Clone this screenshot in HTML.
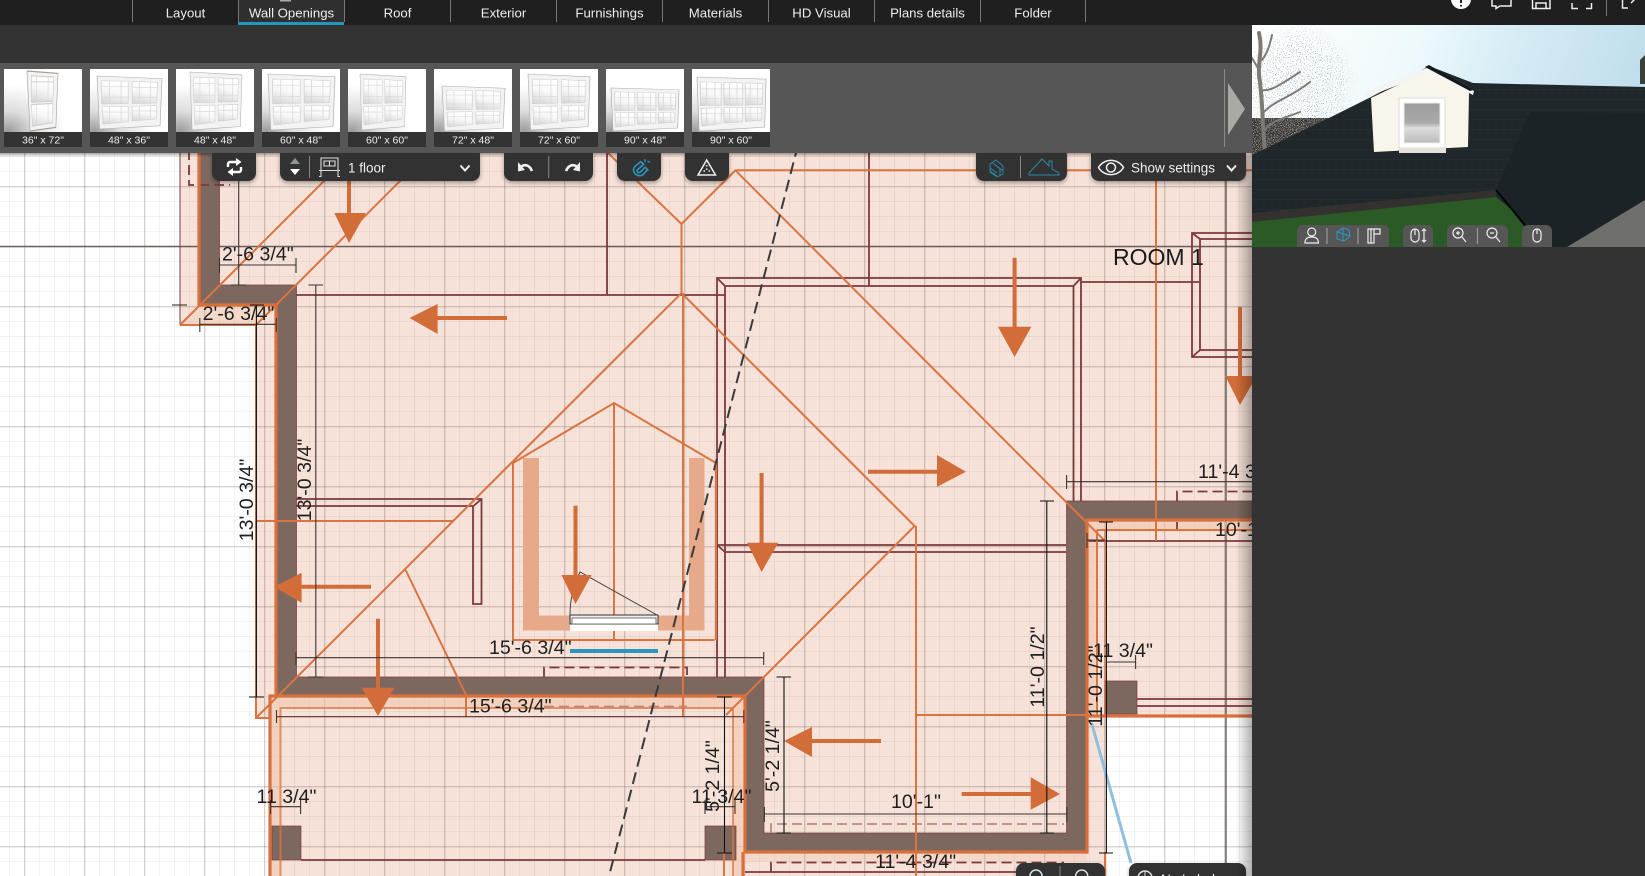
<!DOCTYPE html>
<html><head><meta charset="utf-8"><title>Wall Openings</title>
<style>
html,body{margin:0;padding:0;background:#333;width:1645px;height:876px;overflow:hidden}
svg{display:block}
text{font-family:"Liberation Sans",sans-serif}
.d{font-size:19.6px;fill:#1f1f1f}
.t{font-size:13.2px;fill:#eee;text-anchor:middle}
.l{font-size:10.5px;fill:#eee;text-anchor:middle}
</style></head><body>
<svg width="1645" height="876" viewBox="0 0 1645 876" xmlns="http://www.w3.org/2000/svg">
<defs>
<pattern id="g" x="24" y="6" width="60" height="60" patternUnits="userSpaceOnUse">
<rect x="15" width="1" height="60" fill="rgba(90,70,60,.065)"/><rect x="30" width="1" height="60" fill="rgba(90,70,60,.08)"/><rect x="45" width="1" height="60" fill="rgba(90,70,60,.065)"/>
<rect y="15" width="60" height="1" fill="rgba(90,70,60,.065)"/><rect y="30" width="60" height="1" fill="rgba(90,70,60,.08)"/><rect y="45" width="60" height="1" fill="rgba(90,70,60,.065)"/>
<rect width="1.3" height="60" fill="rgba(70,60,60,.24)"/><rect width="60" height="1.4" fill="rgba(70,60,60,.22)"/>
</pattern>
<pattern id="sh" width="16" height="10" patternUnits="userSpaceOnUse"><rect width="16" height="10" fill="#20272a"/><path d="M0 9.500h16M8 0v5" stroke="#252c2f" stroke-width="1"/></pattern>
<linearGradient id="sky" x1="0" x2="1" y1="0" y2=".2"><stop offset="0" stop-color="#fff"/><stop offset=".42" stop-color="#eef9fc"/><stop offset=".62" stop-color="#d9eef6"/><stop offset="1" stop-color="#bfdeeb"/></linearGradient>
<linearGradient id="gl" x1="0" x2="0" y1="0" y2="1"><stop offset="0" stop-color="#9c9c9c"/><stop offset=".5" stop-color="#aaa"/><stop offset=".62" stop-color="#ddd"/><stop offset="1" stop-color="#bbb"/></linearGradient>
<linearGradient id="bar" x1="0" x2="1"><stop offset="0" stop-color="#000" stop-opacity="0"/><stop offset="1" stop-color="#000" stop-opacity=".3"/></linearGradient>
<linearGradient id="pb" x1="0" x2="0" y1="0" y2="1"><stop offset="0" stop-color="#000" stop-opacity=".35"/><stop offset="1" stop-color="#000" stop-opacity="0"/></linearGradient>
<radialGradient id="ts" cx=".05" cy="1" r=".75"><stop offset="0" stop-color="#9a9a9a"/><stop offset=".45" stop-color="#dedede"/><stop offset="1" stop-color="#fff"/></radialGradient>
<linearGradient id="pn" x1="0" x2=".3" y1="1" y2="0"><stop offset="0" stop-color="#d4d4d4"/><stop offset=".6" stop-color="#f8f8f8"/><stop offset="1" stop-color="#fff"/></linearGradient>
<radialGradient id="tf"><stop offset="0" stop-color="#000"/><stop offset=".65" stop-color="#000" stop-opacity=".85"/><stop offset="1" stop-color="#000" stop-opacity="0"/></radialGradient>
<filter id="sp" x="0" y="0" width="1" height="1"><feTurbulence type="fractalNoise" baseFrequency="1.1" numOctaves="1" seed="3"/><feColorMatrix values="0 0 0 0 .25 0 0 0 0 .25 0 0 0 0 .25 12 0 0 0 -7.4"/><feComposite in2="SourceGraphic" operator="in"/></filter>
<filter id="sq" x="0" y="0" width="1" height="1"><feTurbulence type="fractalNoise" baseFrequency="1.1" numOctaves="1" seed="8"/><feColorMatrix values="0 0 0 0 .55 0 0 0 0 .53 0 0 0 0 .5 12 0 0 0 -6.4"/><feComposite in2="SourceGraphic" operator="in"/></filter>
<filter id="ds" x="-10%" y="-10%" width="120%" height="140%"><feDropShadow dx="0" dy="2" stdDeviation="2" flood-color="#000" flood-opacity=".35"/></filter>

<g id="w1">
<polygon points="0,0 100,4 93,94 10,100" fill="#f3f3f3" stroke="#a99c94" stroke-width="2"/>
<polygon points="14,8 86,10 84,50 14,52" fill="url(#pn)" stroke="#cfcfcf" stroke-width="2"/>
<polygon points="15,56 84,54 82,86 17,92" fill="url(#pn)" stroke="#cfcfcf" stroke-width="2"/>
<path d="M30 8v44M68 10v40M14 18h72M31 56v33M68 55v32" stroke="#d6d6d6" stroke-width="2" fill="none"/>
</g>
<g id="w2">
<polygon points="0,0 100,5 97,94 4,100" fill="#f3f3f3" stroke="#b3a8a2" stroke-width="1"/>
<polygon points="7,9 48,10 48,52 7,53" fill="url(#pn)" stroke="#cdcdcd" stroke-width="1"/>
<polygon points="54,10 93,12 92,51 54,52" fill="url(#pn)" stroke="#cdcdcd" stroke-width="1"/>
<polygon points="8,58 48,57 48,86 9,91" fill="url(#pn)" stroke="#cdcdcd" stroke-width="1"/>
<polygon points="54,57 92,56 91,81 54,85" fill="url(#pn)" stroke="#cdcdcd" stroke-width="1"/>
<path d="M19 9v44M37 10v42M7 20h41M7 40h41M65 10v42M82 11v40M54 22h39M54 40h38M19 58v31M37 57v30M65 57v27M82 56v26M8 68h40M54 66h38" stroke="#d8d8d8" stroke-width="1.200" fill="none"/>
</g>
<g id="w3">
<polygon points="0,0 100,4 98,93 3,100" fill="#f3f3f3" stroke="#b3a8a2" stroke-width="1"/>
<polygon points="5,9 35,10 35,52 5,53" fill="url(#pn)" stroke="#cdcdcd" stroke-width="1"/>
<polygon points="39,10 66,11 66,52 39,52" fill="url(#pn)" stroke="#cdcdcd" stroke-width="1"/>
<polygon points="70,11 95,12 95,51 70,52" fill="url(#pn)" stroke="#cdcdcd" stroke-width="1"/>
<polygon points="6,58 35,57 35,86 7,91" fill="url(#pn)" stroke="#cdcdcd" stroke-width="1"/>
<polygon points="39,57 66,57 66,83 39,85" fill="url(#pn)" stroke="#cdcdcd" stroke-width="1"/>
<polygon points="70,57 94,56 94,80 70,82" fill="url(#pn)" stroke="#cdcdcd" stroke-width="1"/>
<path d="M14 9v44M26 10v42M47 10v42M58 11v41M77 11v40M88 12v39M5 22h90M5 40h90M14 58v31M26 57v30M47 57v27M58 57v26M77 57v25M88 56v24M6 68h88" stroke="#d8d8d8" stroke-width="1.200" fill="none"/>
</g>
<g id="th"><rect width="78" height="63" fill="#fff"/><rect width="78" height="63" fill="url(#ts)"/></g>
</defs>

<!-- canvas -->
<rect width="1645" height="876" fill="#fff"/>
<polygon points="180,150 1252,150 1252,717 1107,717 1107,876 270,876 270,718 257,718 257,325 180,325" fill="#f6e2d8"/>
<rect width="1252" height="876" fill="url(#g)"/>
<!-- axis lines -->
<path d="M0 246.500H1252" stroke="#6a6260" stroke-width="1.400"/>
<path d="M1226 153V876" stroke="#4a4442" stroke-width="1.200"/>
<path d="M180 153V325" stroke="#7e383c" stroke-width="1"/>

<!-- light eave bands -->
<g fill="#f2c6b0" opacity=".6">
<polygon points="270,696 745,696 733,708 280,708 280,876 270,876"/>
<rect x="733" y="696" width="12" height="180"/>
<polygon points="1087,520 1252,520 1252,530 1097,530 1097,716 1087,716"/>
<rect x="745" y="852" width="342" height="10" opacity=".5"/>
<polygon points="180,325 199,305 276,305 256,325" opacity=".5"/>
</g>

<!-- light U -->
<path d="M523 458h16v157.500h150V458h15.500v172.500H523z" fill="#e6a98a"/>

<!-- walls -->
<polygon points="199,150 219.500,150 219.500,285 296.500,285 296.500,677 764,677 764,833 1066.500,833 1066.500,501 1252,501 1252,520 1087,520 1087,852 745.500,852 745.500,696 276,696 276,305 199,305" fill="#7d685f" stroke="#7e383c" stroke-width=".7"/>
<rect x="272" y="826" width="29" height="34" fill="#7d685f" stroke="#7e383c" stroke-width=".7"/>
<rect x="705" y="826" width="31" height="34" fill="#7d685f" stroke="#7e383c" stroke-width=".7"/>
<rect x="1105" y="681" width="32" height="33" fill="#7d685f" stroke="#7e383c" stroke-width=".7"/>

<!-- dark red structure -->
<g fill="none" stroke="#7e383c" stroke-width="1.800">
<path d="M296 295H725M607 153V295M869 153V286"/>
<path d="M717 677V278H1081V501M725 677V286H1073.500V501M717 278l8 8M1081 278l-7.500 8"/>
<path d="M717 545H1066M725 552H1066M717 545l8 7"/>
<path d="M1081 282H1199"/>
<path d="M1252 233H1192V357H1252M1252 239H1200V350H1252M1192 233l8 6M1192 357l8-7"/>
<path d="M296 499H481.500V604H473V506H296M481.500 499l-8 7"/>
<path d="M301 860H705"/>
<path d="M1137 699H1252M1137 706H1252"/>
<path d="M745 872H1087"/>
<path d="M1087 541H1252"/>
</g>
<g fill="none" stroke="#7e383c" stroke-width="1.800" stroke-dasharray="10 5">
<path d="M544 677V667.500H687V677"/>
<path d="M189 150V185H230"/>
<path d="M1177 501V491.500H1252"/>
<path d="M771 872V862.500H1064"/>
<path d="M1177 522V530"/>
</g>
<g fill="none" stroke="#b98a80" stroke-width="1.800" stroke-dasharray="10 5">
<path d="M771 833V824H1064"/>
<path d="M544 706.500H687"/>
</g>

<!-- orange roof lines -->
<g fill="none" stroke="#da7440" stroke-width="2">
<path d="M180 325L352 153M256 325L428 153M276 305L299 282"/>
<path d="M608 153L681.500 224L735.400 170.300H1252"/>
<path d="M735.400 170.300L1104 540"/>
<path d="M681.500 224V293M683 293V717"/>
<path d="M256 718L681.500 293L914.600 526L726 715"/>
<path d="M405.600 570L466 695V717"/>
<path d="M916 526V876"/>
<path d="M916 715H1087"/>
<path d="M1156 170V541"/>
<path d="M256 521H453"/>
<path d="M513 640V463L614 403L716 463V640M614 403V640M513 640H714.500"/>
<path d="M180 325H256"/>
<path d="M256 325V718H270"/>
<path d="M1097 530H1252M1097 530V716"/>
<path d="M1105 530V716" opacity=".6"/>
<path d="M280.500 876V708H733V876" opacity=".75"/>
<path d="M724 853V876"/>
<path d="M1105 852V876"/>
</g>
<g fill="none" stroke="#d9703c" stroke-width="3.200">
<path d="M199 150V305H276V696M270 876V696H745V852H1087V520H1252"/>
<path d="M1087 716H1252"/>
<path d="M743 852V876"/>
</g>

<!-- window opening -->
<rect x="570" y="615" width="88" height="16" fill="#fff"/>
<rect x="570" y="615" width="88" height="9" fill="#eee" stroke="#333" stroke-width="1"/>
<rect x="572" y="618" width="84" height="6" fill="#fff" stroke="#555" stroke-width=".8"/>
<path d="M570 615C570 598 574 584 580 572L657 615" fill="none" stroke="#444" stroke-width="1"/>
<rect x="570" y="649" width="88" height="4" fill="#2a96c0"/>

<!-- arrows -->
<g fill="#d26c38" stroke="none">
<path d="M347 181h4v32h14.700L349 243L334.300 213H347z"/>
<path d="M507 316v4H437.600v14L409.600 318L437.600 304v12z"/>
<path d="M1012.600 257.700h4v69h14.700L1014.600 357L998 326.700h14.600z"/>
<path d="M1238 306.700h4v69.300h14.700L1240 405L1225.300 376H1238z"/>
<path d="M868 469.700h69v-14.700L966 471.700L937 486.700v-13H868z"/>
<path d="M759.600 473h4v69.700h14.700L761.600 572L747 542.700h12.600z"/>
<path d="M573.500 505.700h4v69.300h14L575.500 604L561.500 575h12z"/>
<path d="M371 584.700v4H301.600v14L274 586.700L301.600 572.700v12z"/>
<path d="M376 618.700h4v69h14.500L378 716L361.500 687.700H376z"/>
<path d="M881 739v4H812v14L784 741L812 727v12z"/>
<path d="M961.700 792h69v-14.700L1060 794L1030.700 809.700v-13.700h-69z"/>
</g>

<!-- dashed line + blue link -->
<path d="M798 145L608 880" stroke="#3a3a3a" stroke-width="2" stroke-dasharray="12 6" fill="none"/>
<path d="M1091.600 723L1131 863" stroke="#8fbede" stroke-width="3" fill="none"/>

<!-- dimensions -->
<g fill="none" stroke="#3a3533" stroke-width="1.100">
<path d="M219.500 265H296M219.500 258V273M296 258V273"/>
<path d="M199.800 324.300H276.300M199.800 318V332M276.300 318V332"/>
<path d="M238.700 181V285M231 285H246"/>
<path d="M172 305H187"/>
<path d="M256.400 305V697M250 305H264M249 697H264" stroke="#111"/>
<path d="M315.800 285V677M308.500 285H323M308 677H323"/>
<path d="M296 657.700H763.700M296 652V665M763.700 652V665"/>
<path d="M276.500 716.700H743.800M276.500 710V723M743.800 710V723" stroke="#5a2c2e"/>
<path d="M270.600 806.700H300.600M270.600 800V814M300.600 800V814"/>
<path d="M705 806.700H735M705 800V814M735 800V814"/>
<path d="M724.500 697V853M717 697H732M717 853H732" stroke="#111"/>
<path d="M784 677V833M776.500 677H791M776.500 833H791" stroke="#111"/>
<path d="M764.400 814H1066.800M764.400 807V822M1066.800 807V822"/>
<path d="M1046.800 501V833M1040 501H1054M1040 833H1054" stroke="#111"/>
<path d="M1106.400 522V853M1099 522H1113M1099 853H1113" stroke="#111"/>
<path d="M1106 662H1135.600M1135.600 655V669"/>
<path d="M1066.600 481.700H1252M1066.600 475V489"/>
<path d="M1087 540H1105M1087 533V548"/>
</g>
<g class="d">
<text class="d" x="222" y="260.700">2'-6 3/4"</text>
<text class="d" x="202.600" y="320">2'-6 3/4"</text>
<text class="d" text-anchor="middle" transform="translate(252.800 500) rotate(-90)">13'-0 3/4"</text>
<text class="d" text-anchor="middle" transform="translate(311 480) rotate(-90)">13'-0 3/4"</text>
<text class="d" x="489" y="654">15'-6 3/4"</text>
<text class="d" x="469" y="712.700">15'-6 3/4"</text>
<text class="d" x="256.500" y="803">11 3/4"</text>
<text class="d" x="691.500" y="803">11 3/4"</text>
<text class="d" text-anchor="middle" transform="translate(719 776) rotate(-90)">5'-2 1/4"</text>
<text class="d" text-anchor="middle" transform="translate(779 756) rotate(-90)">5'-2 1/4"</text>
<text class="d" x="891" y="808">10'-1"</text>
<text class="d" x="875" y="868">11'-4 3/4"</text>
<text class="d" text-anchor="middle" transform="translate(1044 667) rotate(-90)">11'-0 1/2"</text>
<text class="d" text-anchor="middle" transform="translate(1102 686) rotate(-90)">11'-0 1/2"</text>
<text class="d" x="1093" y="657">11 3/4"</text>
<text class="d" x="1198" y="478">11'-4 3/4"</text>
<text class="d" x="1215" y="536">10'-1"</text>
<text x="1113" y="265" style="font-size:23px;fill:#1a1a1a">ROOM 1</text>
</g>

<!-- floor bottom toolbars -->
<g filter="url(#ds)">
<path d="M1016 876V871a8 8 0 0 1 8-8h73a8 8 0 0 1 8 8v5z" fill="#333"/>
<path d="M1129 876V871a8 8 0 0 1 8-8h101a8 8 0 0 1 8 8v5z" fill="#333"/>
</g>
<circle cx="1036" cy="876" r="6" fill="none" stroke="#cfe8f2" stroke-width="1.500"/>
<path d="M1060 866V876" stroke="#888"/>
<circle cx="1081.700" cy="876" r="6" fill="none" stroke="#ddd" stroke-width="1.500"/>
<circle cx="1145" cy="878" r="7" fill="none" stroke="#ddd" stroke-width="1.500"/><path d="M1145 871v10M1138 878h14" stroke="#ddd"/>
<text x="1161" y="884" style="font-size:13.500px;fill:#eee">No Labels</text>

<!-- right side panel -->
<rect x="1236" y="153" width="16" height="723" fill="url(#bar)"/>
<rect x="1252" y="25" width="393" height="851" fill="#333"/>

<!-- 3D view -->
<svg x="1252" y="25" width="393" height="222" viewBox="1252 25 393 222">
<rect x="1252" y="25" width="393" height="222" fill="url(#sky)"/>
<rect x="1252" y="118" width="90" height="42" fill="#3a3835"/>
<ellipse cx="1298" cy="85" rx="62" ry="65" fill="url(#tf)" filter="url(#sp)"/>
<rect x="1252" y="118" width="90" height="42" fill="#000" filter="url(#sq)" opacity=".7"/>
<g fill="none" stroke="#7d7a75" stroke-linecap="round">
<path d="M1265 150C1262 125 1263 100 1259 75C1258 60 1263 50 1259 33" stroke-width="4"/>
<path d="M1261 90C1270 92 1280 85 1300 72M1264 112C1275 100 1290 98 1310 82M1259 70L1252 58M1265 130C1272 120 1285 118 1300 112M1262 60C1268 52 1270 44 1272 35" stroke-width="2"/>
</g>
<polygon points="1252,155 1333,116 1371,97 1429,66 1473,83 1645,87 1645,247 1252,247" fill="url(#sh)"/>
<polygon points="1252,213 1496,190 1496,197 1252,222" fill="#33312f"/>
<polygon points="1252,222 1496,197 1557,247 1252,247" fill="#2c5a26"/>
<polygon points="1530,112 1645,113 1645,205 1567,247 1540,247 1496,190" fill="#1c2326"/>
<polygon points="1645,200 1567,247 1645,247" fill="#6e6e6c"/>
<path d="M1543 247L1496 190" stroke="#050607" stroke-width="2"/>
<path d="M1640 60L1645 55V84H1640z" fill="#39403a"/>
<!-- dormer -->
<polygon points="1371,98 1429,70 1469,93 1468,147 1374,152" fill="#f8f6ea"/>
<polygon points="1365,92 1429,67 1474,91 1473,95 1429,73 1367,97" fill="#f4f4f2"/>
<polygon points="1425,67 1429,65 1473,90 1470,91" fill="#15191b"/>
<rect x="1399" y="98" width="46" height="50" fill="#fff" stroke="#ddd"/>
<rect x="1404" y="103" width="36" height="40" fill="url(#gl)" stroke="#eee"/>
<rect x="1399" y="148" width="47" height="5" fill="#e4e2d8"/>
</svg>
<!-- 3D toolbar -->
<g fill="#565656">
<path d="M1297 247V231a6 6 0 0 1 6-6h80a6 6 0 0 1 6 6v16z"/>
<path d="M1403 247V231a6 6 0 0 1 6-6h18a6 6 0 0 1 6 6v16z"/>
<path d="M1447 247V231a6 6 0 0 1 6-6h49a6 6 0 0 1 6 6v16z"/>
<path d="M1522 247V231a6 6 0 0 1 6-6h18a6 6 0 0 1 6 6v16z"/>
</g>
<g fill="none" stroke="#eee" stroke-width="1.200">
<circle cx="1311.700" cy="232" r="4"/><path d="M1305 243c0-5 3-6 6.700-6s6.700 1 6.700 6z"/>
<path d="M1327 228V244M1358 228V244M1477.500 228V244" stroke="#999"/>
<path d="M1368 229h12v5h-6v9h-6zM1371 229v14M1374 234v-5" />
<rect x="1411" y="229" width="8" height="13" rx="4"/><path d="M1415 229v6M1424 229v13M1422 231l2-2 2 2M1422 240l2 2 2-2"/>
<circle cx="1458" cy="233" r="5"/><path d="M1462 237l4 5M1456 233h4M1458 231v4"/>
<circle cx="1492" cy="233" r="5"/><path d="M1496 237l4 5M1490 233h4"/>
<rect x="1533" y="229" width="8" height="13" rx="4"/><path d="M1537 229v5"/>
</g>
<path d="M1337 232l6-4 6 2 1 6-6 5-7-2zM1343 228v13M1337 232l13 4" fill="none" stroke="#2a96c0" stroke-width="1.100"/>

<!-- top bars -->
<rect width="1645" height="25" fill="#1f1f1f"/>
<rect x="0" y="25" width="1252" height="38" fill="#333"/>
<rect x="0" y="63" width="1252" height="90" fill="#565656"/>
<rect x="0" y="153" width="1236" height="4" fill="url(#pb)"/>
<rect x="238" y="0" width="106" height="22" fill="#2f2f2f"/>
<rect x="238" y="22" width="106" height="3" fill="#2596bd"/>
<path d="M132.500 0V22M238.500 0V22M344.500 0V22M450.500 0V22M556.500 0V22M662.500 0V22M768.500 0V22M874.500 0V22M980.500 0V22M1085.500 0V22" stroke="#777"/>
<rect x="280" y="0" width="11" height="1.500" fill="#aaa"/>
<text class="t" x="185.500" y="17.500">Layout</text>
<text class="t" x="291.500" y="17.500">Wall Openings</text>
<text class="t" x="397.500" y="17.500">Roof</text>
<text class="t" x="503.500" y="17.500">Exterior</text>
<text class="t" x="609.500" y="17.500">Furnishings</text>
<text class="t" x="715.500" y="17.500">Materials</text>
<text class="t" x="821.500" y="17.500">HD Visual</text>
<text class="t" x="927.500" y="17.500">Plans details</text>
<text class="t" x="1033" y="17.500">Folder</text>
<!-- top right icons -->
<circle cx="1461" cy="-1" r="10" fill="#fff"/><path d="M1461 0V3M1461 5v1.500" stroke="#222" stroke-width="2"/>
<path d="M1492 -4V6H1496L1496 8.500L1500 6H1511V-4" fill="none" stroke="#eee" stroke-width="1.500"/>
<path d="M1532.500 -4V8.500H1550V-4M1536 8.500V3H1546V8.500" fill="none" stroke="#eee" stroke-width="1.500"/>
<path d="M1572 3V8.500H1578M1586 8.500H1591.500V3" fill="none" stroke="#eee" stroke-width="1.500"/>
<path d="M1606.500 0V16" stroke="#777"/>
<path d="M1622.500 0V8H1628M1631 3L1636 -2" fill="none" stroke="#eee" stroke-width="1.500"/>

<!-- thumbnails -->
<use href="#th" x="4" y="69"/><use href="#w1" transform="translate(27 71) scale(.31 .6)"/>
<use href="#th" x="90" y="69"/><use href="#w2" transform="translate(97 76) scale(.65 .53)"/>
<use href="#th" x="176" y="69"/><use href="#w2" transform="translate(190 72) scale(.52 .58)"/>
<use href="#th" x="262" y="69"/><use href="#w2" transform="translate(268 74) scale(.67 .56)"/>
<use href="#th" x="348" y="69"/><use href="#w2" transform="translate(360 74) scale(.46 .56)"/>
<use href="#th" x="434" y="69"/><use href="#w2" transform="translate(442 86) scale(.63 .45)"/>
<use href="#th" x="520" y="69"/><use href="#w2" transform="translate(528 74) scale(.62 .56)"/>
<use href="#th" x="606" y="69"/><use href="#w3" transform="translate(611 88) scale(.68 .43)"/>
<use href="#th" x="692" y="69"/><use href="#w3" transform="translate(697 77) scale(.69 .54)"/>
<g fill="#333">
<rect x="4" y="132" width="78" height="15"/><rect x="90" y="132" width="78" height="15"/><rect x="176" y="132" width="78" height="15"/><rect x="262" y="132" width="78" height="15"/><rect x="348" y="132" width="78" height="15"/><rect x="434" y="132" width="78" height="15"/><rect x="520" y="132" width="78" height="15"/><rect x="606" y="132" width="78" height="15"/><rect x="692" y="132" width="78" height="15"/>
</g>
<text class="l" x="43" y="143.500">36" x 72"</text>
<text class="l" x="129" y="143.500">48" x 36"</text>
<text class="l" x="215" y="143.500">48" x 48"</text>
<text class="l" x="301" y="143.500">60" x 48"</text>
<text class="l" x="387" y="143.500">60" x 60"</text>
<text class="l" x="473" y="143.500">72" x 48"</text>
<text class="l" x="559" y="143.500">72" x 60"</text>
<text class="l" x="645" y="143.500">90" x 48"</text>
<text class="l" x="731" y="143.500">90" x 60"</text>
<path d="M1224.500 69V147" stroke="#8a8a8a"/>
<polygon points="1228,83 1245,109 1228,135" fill="#a9a9a6"/>

<!-- floating toolbar -->
<g fill="#333" filter="url(#ds)">
<path d="M212 153H256V173a8 8 0 0 1-8 8H220a8 8 0 0 1-8-8z"/>
<path d="M280 153H480V173a8 8 0 0 1-8 8H288a8 8 0 0 1-8-8z"/>
<path d="M504 153H593V173a8 8 0 0 1-8 8H512a8 8 0 0 1-8-8z"/>
<path d="M617 153H661V173a8 8 0 0 1-8 8H625a8 8 0 0 1-8-8z"/>
<path d="M685 153H729V173a8 8 0 0 1-8 8H693a8 8 0 0 1-8-8z"/>
<path d="M976 153H1067V173a8 8 0 0 1-8 8H984a8 8 0 0 1-8-8z"/>
<path d="M1091 153H1246V173a8 8 0 0 1-8 8H1099a8 8 0 0 1-8-8z"/>
</g>
<!-- swap -->
<g fill="none" stroke="#fff" stroke-width="2.400"><path d="M228 167V164a2 2 0 0 1 2-2H237M241 167V170a2 2 0 0 1-2 2H232"/></g>
<path d="M236 158L241.500 162L236 166zM233 168L227.500 172L233 176z" fill="#fff"/>
<!-- floor -->
<polygon points="295,158 300,164 290,164" fill="#8d9694"/>
<polygon points="295,175 300,169 290,169" fill="#fff"/>
<path d="M309.500 156V178" stroke="#888"/>
<path d="M319 176.500H321V170.500H338V176.500H340M321 170.500V158H338V170.500M319 170.500H340M324 161H335V166H324zM329.500 161V166" fill="none" stroke="#ddd" stroke-width="1.100"/>
<text x="348" y="172.700" style="font-size:13.500px;fill:#eee">1 floor</text>
<path d="M460.500 165.500L465 170.500L469.500 165.500" fill="none" stroke="#eee" stroke-width="2"/>
<!-- undo redo -->
<path d="M520 167.500C524 164 529 164 532 171" fill="none" stroke="#eee" stroke-width="2.600"/>
<polygon points="518,162 525,170 518,171.500" fill="#eee"/>
<path d="M548.700 156V178" stroke="#888"/>
<path d="M578 167.500C574 164 569 164 566 171" fill="none" stroke="#eee" stroke-width="2.600"/>
<polygon points="580,162 573,170 580,171.500" fill="#eee"/>
<!-- magnet -->
<g transform="translate(640 168) scale(.74) translate(-640 -168)">
<path d="M645 163L637 170C634 173 638 176 641 173L647 167L650.500 170.500L644 177C637 182 627 173 633 166L641 159.500z" fill="none" stroke="#2a96c0" stroke-width="2.200"/>
<path d="M646 156l1.500 4M650 159l4 1" stroke="#2a96c0" stroke-width="1.800"/>
</g>
<!-- triangle -->
<path d="M706.700 160L698 175H715.500z" fill="none" stroke="#eee" stroke-width="1.500"/>
<path d="M706.700 165v1.500M703.500 171h1.500M708.500 171h1.500M706.700 168.500v1.500" stroke="#eee" stroke-width="1.500"/>
<!-- layers -->
<path d="M990 164l6-4 7 6v8l-6 3-7-5zM993 163l7 6v7M990 168l7 5M990 171l7 5M997 166l6 5" fill="none" stroke="#2a8ba8" stroke-width=".9"/>
<path d="M1020.500 156V178" stroke="#888"/>
<path d="M1029 173L1042 159L1049 166V161H1052V169L1059 173V175H1029z" fill="none" stroke="#2a8ba8" stroke-width="1"/>
<!-- eye -->
<path d="M1098.500 167.500C1104 158 1118 158 1123.500 167.500C1118 177 1104 177 1098.500 167.500z" fill="none" stroke="#eee" stroke-width="1.500"/>
<circle cx="1111" cy="167.500" r="4.500" fill="none" stroke="#eee" stroke-width="1.500"/>
<text x="1131" y="172.700" style="font-size:13.500px;fill:#eee">Show settings</text>
<path d="M1227 165.500L1231.500 170.500L1236 165.500" fill="none" stroke="#eee" stroke-width="2"/>
</svg>
</body></html>
